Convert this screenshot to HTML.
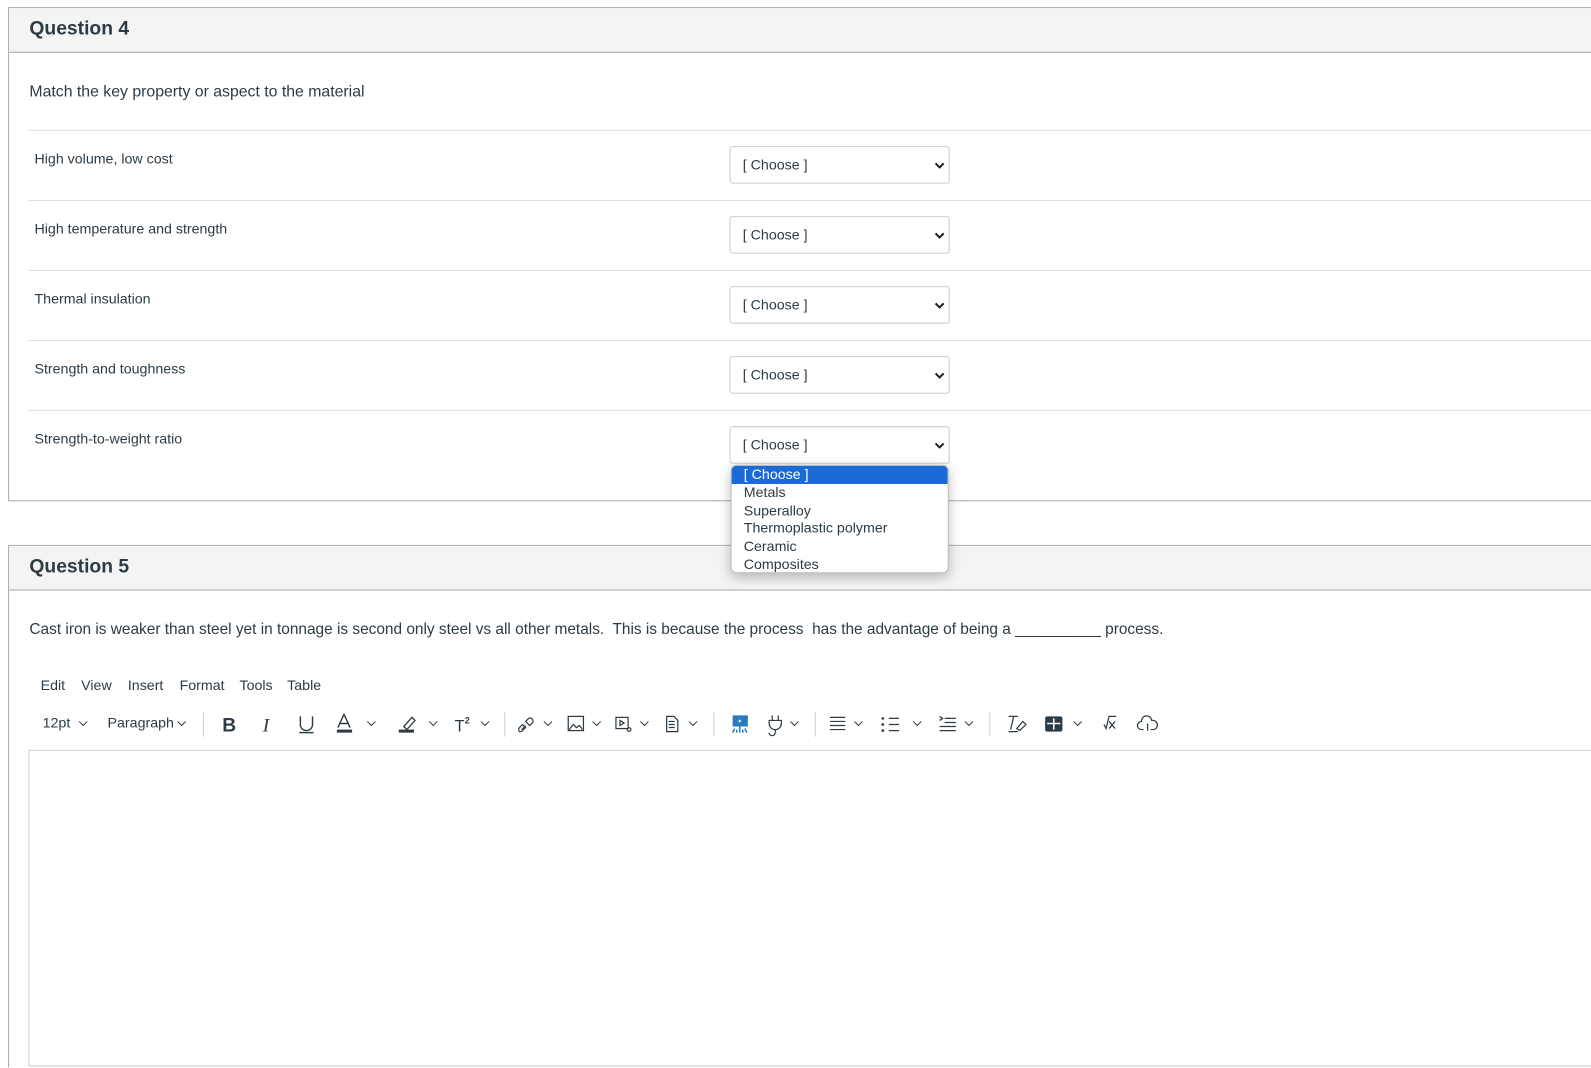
<!DOCTYPE html>
<html><head><meta charset="utf-8"><style>
*{box-sizing:border-box;margin:0;padding:0}
html,body{width:1591px;height:1068px;overflow:hidden;background:#fff}
body{font-family:"Liberation Sans",sans-serif;color:#2d3b45;position:relative}
#w{position:absolute;left:0;top:0;width:1568px;height:1052px;overflow:hidden;transform:scale(1.0147);transform-origin:0 0}
.abs{position:absolute}
.panel{position:absolute;left:8px;right:-2px;border:1px solid #a8a8a8;}
.hdr{background:#f4f4f4;border-bottom:1px solid #a8a8a8;height:44px;padding-left:20px;font-size:19px;font-weight:bold;line-height:42px;color:#2d3b45}
.sep{position:absolute;left:28px;right:0;height:1px;background:#dcdcdc}
.lbl{position:absolute;left:34px;font-size:14px;color:#2d3b45}
.sel{position:absolute;left:719px;width:217px;height:37px;border:1px solid #c7cdd1;border-radius:3px;background:#fff;font-size:14px;line-height:35px;padding-left:12px;color:#2d3b45}
.sel svg{position:absolute;right:4px;top:14px}
.dd{position:absolute;left:720px;top:458px;width:215px;height:107px;background:#fff;border:1px solid #bbb;border-radius:6px;box-shadow:0 4px 12px rgba(0,0,0,.25);font-size:14px;overflow:hidden}
.dd div{height:17.8px;line-height:17.8px;padding-left:12px;color:#2d3b45}
.dd .hl{background:#1a6bd6;color:#fff}
.mb{position:absolute;top:667px;font-size:14px;color:#2d3b45}
.tb{position:absolute;top:704px;font-size:14px;color:#2d3b45}
.vs{position:absolute;top:702px;width:1px;height:24px;background:#c7cdd1}
</style></head><body><div id="w">
<div class="panel" style="top:7px;height:487px">
 <div class="hdr">Question 4</div>
</div>
<div class="abs" style="left:29px;top:82px;font-size:15.6px">Match the key property or aspect to the material</div>
<div class="sep" style="top:128px"></div>
<div class="sep" style="top:197px"></div>
<div class="sep" style="top:266px"></div>
<div class="sep" style="top:335px"></div>
<div class="sep" style="top:404px"></div>
<div class="lbl" style="top:148px">High volume, low cost</div>
<div class="lbl" style="top:217px">High temperature and strength</div>
<div class="lbl" style="top:286px">Thermal insulation</div>
<div class="lbl" style="top:355px">Strength and toughness</div>
<div class="lbl" style="top:424px">Strength-to-weight ratio</div>
<div class="sel" style="top:144px">[ Choose ]<svg width="10" height="8"><polyline points="1,2 5,6 9,2" fill="none" stroke="#222" stroke-width="2"/></svg></div>
<div class="sel" style="top:213px">[ Choose ]<svg width="10" height="8"><polyline points="1,2 5,6 9,2" fill="none" stroke="#222" stroke-width="2"/></svg></div>
<div class="sel" style="top:282px">[ Choose ]<svg width="10" height="8"><polyline points="1,2 5,6 9,2" fill="none" stroke="#222" stroke-width="2"/></svg></div>
<div class="sel" style="top:351px">[ Choose ]<svg width="10" height="8"><polyline points="1,2 5,6 9,2" fill="none" stroke="#222" stroke-width="2"/></svg></div>
<div class="sel" style="top:420px">[ Choose ]<svg width="10" height="8"><polyline points="1,2 5,6 9,2" fill="none" stroke="#222" stroke-width="2"/></svg></div>

<div class="panel" style="top:537px;height:515px;border-bottom:none">
 <div class="hdr">Question 5</div>
</div>
<div class="dd"><div class="hl">[ Choose ]</div><div>Metals</div><div>Superalloy</div><div>Thermoplastic polymer</div><div>Ceramic</div><div>Composites</div></div>
<div class="abs" style="left:29px;top:612px;font-size:15.2px;white-space:pre">Cast iron is weaker than steel yet in tonnage is second only steel vs all other metals.  This is because the process  has the advantage of being a __________ process.</div>

<div class="mb" style="left:40px">Edit</div>
<div class="mb" style="left:80px">View</div>
<div class="mb" style="left:126px">Insert</div>
<div class="mb" style="left:177px">Format</div>
<div class="mb" style="left:236px">Tools</div>
<div class="mb" style="left:283px">Table</div>

<div class="tb" style="left:42px">12pt</div>
<div class="tb" style="left:106px">Paragraph</div>
<svg class="abs" style="left:0;top:0" width="1568" height="1052">
 <g fill="none" stroke="#2d3b45" stroke-width="1">
  <polyline points="78,711 82,715 86,711"/>
  <polyline points="175,711 179,715 183,711"/>
  <polyline points="362,711 366,715 370,711"/>
  <polyline points="423,711 427,715 431,711"/>
  <polyline points="474,711 478,715 482,711"/>
  <polyline points="536,711 540,715 544,711"/>
  <polyline points="584,711 588,715 592,711"/>
  <polyline points="631,711 635,715 639,711"/>
  <polyline points="679,711 683,715 687,711"/>
  <polyline points="779,711 783,715 787,711"/>
  <polyline points="842,711 846,715 850,711"/>
  <polyline points="900,711 904,715 908,711"/>
  <polyline points="951,711 955,715 959,711"/>
  <polyline points="1058,711 1062,715 1066,711"/>
 </g>
 <text x="219" y="721" font-family="Liberation Sans" font-weight="bold" font-size="19" fill="#2d3b45">B</text>
 <text x="259" y="721" font-family="Liberation Serif" font-style="italic" font-size="19" fill="#2d3b45">I</text>
 <g stroke="#2d3b45" fill="none" stroke-width="1.4">
  <path d="M296 706 v8 a6 6 0 0 0 12 0 v-8"/><line x1="295" y1="722" x2="309" y2="722"/>
  <path d="M333 717 l6 -13 l6 13 M335 713 h8"/>
 </g>
 <rect x="332" y="719" width="15" height="3" fill="#2d3b45"/>
 <path d="M398 716 l8 -9 l3 3 l-8 9 z" fill="none" stroke="#2d3b45" stroke-width="1.3"/>
 <rect x="393" y="719" width="15" height="3" fill="#2d3b45"/>
 <text x="448" y="721" font-family="Liberation Sans" font-size="16" fill="#2d3b45">T</text>
 <text x="458" y="713" font-family="Liberation Sans" font-weight="bold" font-size="9" fill="#2d3b45">2</text>
 <g stroke="#2d3b45" fill="none" stroke-width="1.2">
  <path d="M514 719 l4 -4 m-6 6 a3 3 0 0 1 0 -4 l3 -3 3 3 -3 3 a3 3 0 0 1 -3 1 z M518 711 l3 -3 a3 3 0 0 1 4 4 l-3 3 z"/>
  <rect x="560" y="706" width="15" height="14"/><path d="M561 719 l4 -5 3 3 3 -2 3 4"/>
  <rect x="607" y="707" width="12" height="11"/><path d="M611 710 l4 2.5 -4 2.5 z"/><circle cx="620" cy="719" r="1.8"/>
  <path d="M657 706 h7 l4 4 v11 h-11 z M659 711 h6 M659 714 h6 M659 717 h6"/>
  <path d="M761 705 v5 M767 705 v5 M758 710 h12 v3 a6 6 0 0 1 -12 0 z M764 719 v3 a3 3 0 0 1 -6 0"/>
  <path d="M818 707 h15 M818 711 h15 M818 715 h15 M818 719 h15"/>
  <path d="M876 708 h10 M876 714 h10 M876 720 h10"/>
  <path d="M931 708 h11 M931 712 h11 M926 716 h16 M926 720 h16 M926 710 l3 -2 -3 -2"/>
  <path d="M994 706 h9 M999 706 l-3 13 M994 721 h9 M1002 718 l6 -7 3 3 -6 6 z"/>
  <path d="M1088 714 l2 4 3 -12 h7 M1093 711 l6 7 M1099 711 l-6 7"/>
  <path d="M1127 719 h-2 a4 4 0 0 1 0 -8 a5 5 0 0 1 10 -1 a4 4 0 0 1 2 9 h-3 M1131 713 v7"/>
 </g>
 <circle cx="870" cy="708" r="1.3" fill="#2d3b45"/><circle cx="870" cy="714" r="1.3" fill="#2d3b45"/><circle cx="870" cy="720" r="1.3" fill="#2d3b45"/>
 <rect x="1030" y="706" width="17" height="15" rx="2" fill="#2d3b45"/>
 <path d="M1032 713 h13 M1038.5 708 v11" stroke="#fff" stroke-width="1.5"/>
 <rect x="722" y="705" width="15" height="11" fill="#2b7abc"/>
 <path d="M729 716 v6 M724 718 l-2 4 M734 718 l2 4 M726 719 v3 M732 719 v3" stroke="#2b7abc" stroke-width="1.5"/>
 <path d="M728 709 l3 1.5 -3 1.5z" fill="#fff"/>
</svg>
<div class="vs" style="left:200px"></div>
<div class="vs" style="left:497px"></div>
<div class="vs" style="left:703px"></div>
<div class="vs" style="left:803px"></div>
<div class="vs" style="left:975px"></div>
<div class="abs" style="left:28px;top:739px;right:-2px;height:312px;border:1px solid #c7cdd1;border-radius:2px"></div>
</div></body></html>
